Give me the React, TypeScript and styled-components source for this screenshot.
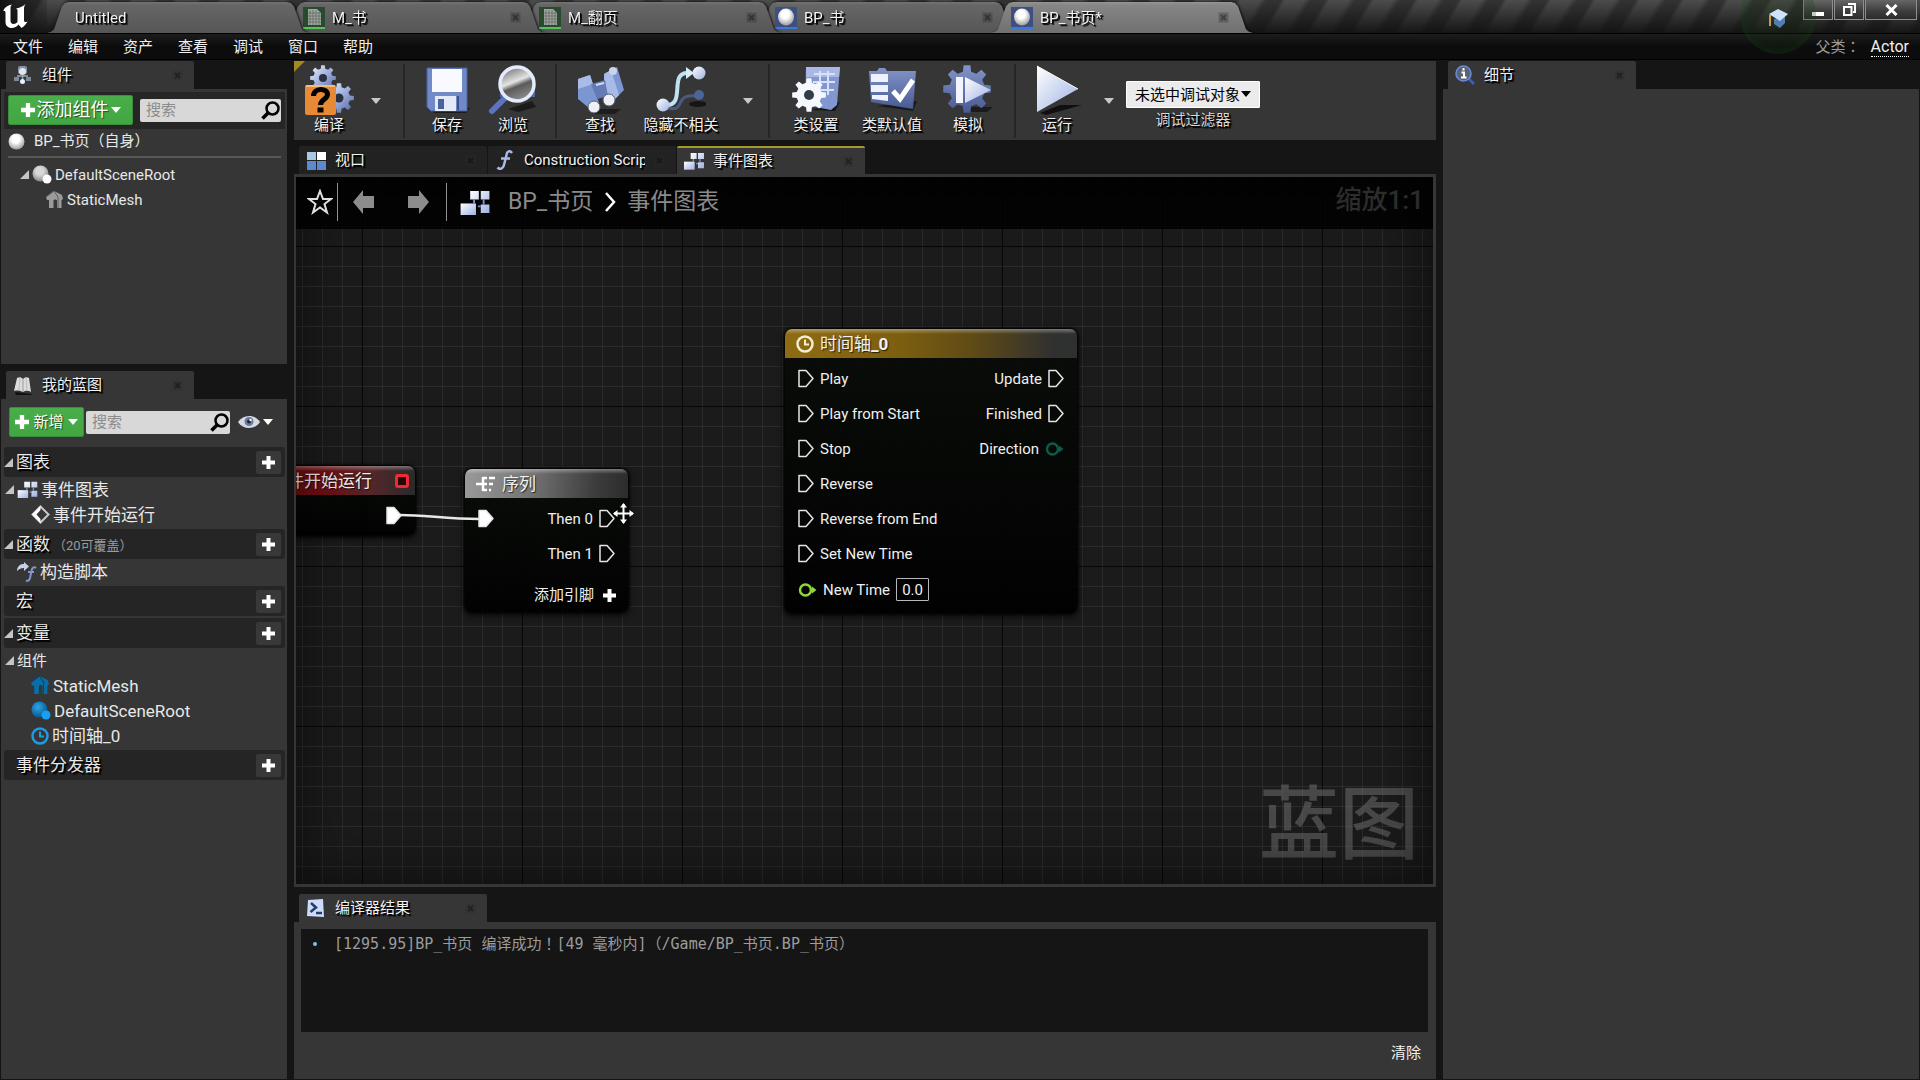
import React from 'react';
import styled, { createGlobalStyle, css } from 'styled-components';

const GlobalStyle = createGlobalStyle`
  *, *::before, *::after { box-sizing: border-box; }
  body { margin: 0; background: #151515; color: #e8e8e8; font-family: Roboto, "Noto Sans CJK SC", sans-serif; font-size: 15px; line-height: 20px; }
  button, input, select { font: inherit; color: inherit; margin: 0; padding: 0; border: 0; background: none; border-radius: 0; outline: none; }
  button { cursor: pointer; white-space: nowrap; }
  ul { list-style: none; margin: 0; padding: 0; }
  svg { display: block; flex: none; }
`;

const shadow = css`text-shadow: 1px 1px 1px #000, 2px 2px 1px #000;`;

/* ---------- shell ---------- */

const App_ = styled.div`
  height: 100vh;
  display: flex;
  flex-direction: column;
  background: #151515;
  overflow: hidden;
`;

const TitleBar = styled.header`
  height: 34px;
  flex: none;
  display: flex;
  align-items: flex-end;
  border-bottom: 1px solid #000;
  background:
    linear-gradient(180deg, rgba(20, 20, 20, 0) 0%, rgba(16, 16, 16, 0.9) 100%),
    repeating-linear-gradient(121deg, #4c4c4c 0, #4c4c4c 16px, #333 22px, #333 34px, #4c4c4c 38px);
`;

const LogoBox = styled.div`
  width: 47px;
  height: 33px;
  padding: 3px 0 0 2px;
  background: linear-gradient(90deg, #111, rgba(17, 17, 17, 0.2));
`;

const DocTabs = styled.div`
  display: flex;
  height: 31px;
  flex: 1;
`;

const DocTabShape = styled.div<{ $active?: boolean; $order: number }>`
  position: relative;
  z-index: ${p => p.$order};
  width: 262px;
  height: 31px;
  margin-right: -26px;
  padding: 0 24px 0 20px;
  display: flex;
  align-items: center;
  gap: 7px;
  filter: drop-shadow(1px 0 1px rgba(0, 0, 0, 0.8));
  &::before {
    content: '';
    position: absolute;
    inset: 0;
    z-index: -1;
    background: ${p => (p.$active
      ? 'linear-gradient(180deg, #969696 0, #868686 3px, #707070 100%)'
      : 'linear-gradient(180deg, #747474 0, #666 3px, #565656 100%)')};
    clip-path: polygon(0 100%, 4px 96%, 7px 88%, 15px 14%, 18px 3%, 22px 0, calc(100% - 22px) 0, calc(100% - 18px) 3%, calc(100% - 15px) 14%, calc(100% - 7px) 88%, calc(100% - 4px) 96%, 100% 100%);
  }
`;

const TabLabel = styled.button<{ $indent?: boolean }>`
  flex: 1;
  min-width: 0;
  text-align: left;
  overflow: hidden;
  line-height: 24px;
  color: #f2f2f2;
  padding-left: ${p => (p.$indent ? '8px' : '0')};
  ${shadow}
`;

const CloseButton = styled.button`
  width: 11px;
  height: 11px;
  flex: none;
  opacity: 0.55;
`;

const WindowTools = styled.div`
  align-self: flex-start;
  display: flex;
  height: 33px;
  padding-right: 3px;
`;

const TutorialButton = styled.button`
  position: relative;
  width: 48px;
  height: 33px;
  padding: 4px 0 0 14px;
  &::before {
    content: '';
    position: absolute;
    left: -14px;
    top: -24px;
    width: 76px;
    height: 78px;
    border-radius: 50%;
    background: radial-gradient(circle, rgba(20, 60, 20, 0.2) 55%, rgba(20, 80, 20, 0.5) 100%);
    pointer-events: none;
  }
  svg { position: relative; }
`;

const WindowButton = styled.button<{ $wide?: boolean }>`
  width: ${p => (p.$wide ? '52px' : '30px')};
  height: 20px;
  display: flex;
  align-items: center;
  justify-content: center;
  border: 1px solid #8e8e8e;
  border-top: 0;
  margin-left: 1px;
  background: linear-gradient(180deg, #666, #3c3c3c 60%, #2c2c2c);
`;

const MenuBar = styled.nav`
  height: 26px;
  flex: none;
  display: flex;
  align-items: center;
  gap: 25px;
  padding: 0 11px 0 13px;
  border-bottom: 1px solid #000;
  background: linear-gradient(180deg, #1c1c1c, #0c0c0c 50%, #0c0c0c);
`;

const MenuItem = styled.button`
  line-height: 24px;
  color: #f0f0f0;
`;

const ParentClass = styled.div`
  margin-left: auto;
  display: flex;
  align-items: center;
  gap: 10px;
  color: #9a9a9a;
  font-family: Roboto, "Noto Sans CJK TC", sans-serif;
  a {
    font-size: 16px;
    line-height: 19px;
    color: #f0f0f0;
    text-decoration: none;
    border-bottom: 1px dotted #fff;
  }
`;

const Workspace = styled.main`
  flex: 1;
  min-height: 0;
  display: grid;
  grid-template-columns: 286px minmax(0, 1fr) 476px;
  column-gap: 7px;
  padding: 1px;
`;

const Dock = styled.section`
  display: flex;
  flex-direction: column;
  min-height: 0;
  min-width: 0;
`;

/* ---------- dock tabs ---------- */

const TabStrip = styled.div<{ $gap?: number }>`
  display: flex;
  gap: 1px;
  height: 28px;
  flex: none;
  margin-top: ${p => p.$gap ?? 0}px;
  padding-left: 5px;
`;

const DockTab = styled.div<{ $state?: 'idle' | 'focus' }>`
  width: 188px;
  height: 28px;
  display: flex;
  align-items: center;
  gap: 9px;
  padding: 0 11px 0 7px;
  border-top: ${p => (p.$state === 'focus' ? '2px solid #a79a2c' : '0')};
  border-radius: 2px 2px 0 0;
  background: ${p => (p.$state === 'idle' ? '#222' : '#363636')};
`;

const TabIcon = styled.span`
  width: 20px;
  display: flex;
  justify-content: center;
`;

const Panel = styled.div<{ $fill?: boolean }>`
  flex: ${p => (p.$fill ? '1' : 'none')};
  min-height: 0;
  background: #363636;
`;

/* ---------- left column ---------- */

const ComponentsPanel = styled(Panel)`
  height: 275px;
`;

const ComponentTools = styled.div`
  display: flex;
  align-items: center;
  gap: 7px;
  margin: 0 2px 0 3px;
  height: 40px;
  padding: 3px 4px 1px 4px;
  background: linear-gradient(#363636 3px, #262626 3px);
`;

const GreenButton = styled.button<{ $large?: boolean }>`
  flex: none;
  height: 30px;
  display: flex;
  align-items: center;
  justify-content: center;
  gap: ${p => (p.$large ? '2px' : '4px')};
  width: ${p => (p.$large ? '125px' : '75px')};
  font-size: ${p => (p.$large ? '18px' : '15px')};
  color: #fff;
  background: linear-gradient(180deg, #49ae49, #42a642);
  border: 1px solid #3a8f3a;
  border-radius: 2px;
  text-shadow: 1px 1px 1px #1c4a1c;
`;

const SearchBox = styled.label`
  flex: 1;
  min-width: 0;
  height: 23px;
  display: flex;
  align-items: center;
  padding: 0 1px 0 6px;
  background: #d8d8d8;
  border-radius: 2px;
  input { flex: 1; min-width: 0; color: #222; line-height: 20px; }
  input::placeholder { color: #8c8c8c; opacity: 1; }
`;

const SelfRow = styled.div`
  display: flex;
  align-items: center;
  gap: 9px;
  height: 29px;
  margin: 0 6px 4px 7px;
  padding-bottom: 3px;
  border-bottom: 2px solid #585858;
  font-family: Roboto, "Noto Sans CJK TC", sans-serif;
`;

const TreeRow = styled.li<{ $depth: number; $big?: boolean }>`
  display: flex;
  align-items: center;
  height: 25px;
  gap: 3px;
  padding-left: ${p => p.$depth}px;
  font-size: ${p => (p.$big ? '17px' : '15px')};
`;

const Expander = styled.button`
  width: 9px;
  height: 20px;
  display: flex;
  align-items: center;
  flex: none;
`;

const BlueprintTools = styled.div`
  display: flex;
  align-items: center;
  gap: 2px;
  height: 48px;
  padding: 0 14px 2px 8px;
`;

const ViewButton = styled.button`
  display: flex;
  align-items: center;
  gap: 3px;
  margin-left: 6px;
`;

const Category = styled.div`
  display: flex;
  align-items: center;
  height: 30px;
  margin: 0 2px 0 3px;
  padding-right: 4px;
  background: #252525;
  border-radius: 3px;
`;

const CategoryName = styled.h3<{ $closed?: boolean }>`
  margin: 0;
  padding-left: ${p => (p.$closed ? '12px' : '3px')};
  font-size: 17px;
  font-weight: 400;
  line-height: 24px;
  ${shadow}
`;

const CategoryNote = styled.span`
  font-family: Roboto, "Noto Sans CJK TC", sans-serif;
  font-size: 13px;
  margin-left: 3px;
  padding-top: 3px;
  color: #9a9a9a;
`;

const AddButton = styled.button`
  margin-left: auto;
  width: 25px;
  height: 23px;
  display: flex;
  align-items: center;
  justify-content: center;
  background: #383838;
  border-radius: 2px;
`;

const CategoryBlock = styled.section`
  margin-bottom: 2px;
`;

/* ---------- toolbar ---------- */

const Toolbar = styled.div`
  position: relative;
  flex: none;
  height: 79px;
  display: flex;
  align-items: center;
  background: #363636;
  overflow: hidden;
  &::before {
    content: '';
    position: absolute;
    left: 0;
    top: 0;
    border-top: 11px solid #a48824;
    border-right: 11px solid transparent;
  }
`;

const ToolGroup = styled.div<{ $pad?: number; $end?: number }>`
  display: flex;
  align-items: center;
  height: 74px;
  padding: 0 ${p => p.$end ?? p.$pad ?? 8}px 0 ${p => p.$pad ?? 8}px;
  border-right: 2px solid #262626;
  &:last-child { border-right: 0; }
`;

const ToolButton = styled.button<{ $width: number }>`
  width: ${p => p.$width}px;
  height: 72px;
  display: flex;
  flex-direction: column;
  align-items: center;
  color: #f0f0f0;
  ${shadow}
`;

const DropButton = styled.button`
  width: 22px;
  height: 70px;
  display: flex;
  align-items: center;
  justify-content: center;
  margin-left: 9px;
`;

const DebugFilter = styled.div`
  display: flex;
  flex-direction: column;
  align-items: center;
  gap: 2px;
  margin-left: 6px;
  padding-top: 10px;
  label { color: #d8d8d8; ${shadow} }
`;

const SelectBox = styled.div`
  position: relative;
  select {
    appearance: none;
    width: 134px;
    height: 27px;
    padding-left: 8px;
    color: #000;
    background: #ebebeb;
    border: 1px solid #fff;
    border-radius: 1px;
  }
  svg { position: absolute; right: 9px; top: 10px; pointer-events: none; }
`;

/* ---------- graph ---------- */

const GraphFrame = styled.div`
  flex: 1;
  min-height: 0;
  border: 3px solid #363636;
  border-left-width: 2px;
`;

const Graph = styled.div`
  position: relative;
  height: 100%;
  overflow: hidden;
  background-color: #1b1b1b;
  background-image:
    linear-gradient(90deg, #070707 1px, transparent 1px),
    linear-gradient(180deg, #070707 1px, transparent 1px),
    linear-gradient(90deg, #2b2b2b 1px, transparent 1px),
    linear-gradient(180deg, #2b2b2b 1px, transparent 1px);
  background-size: 160px 160px, 160px 160px, 20px 20px, 20px 20px;
  background-position: 66px 0, 0 69px, 6px 0, 0 9px;
  &::after {
    content: '';
    position: absolute;
    inset: 0;
    pointer-events: none;
    box-shadow: inset 0 0 60px rgba(0, 0, 0, 0.6);
  }
`;

const GraphHeader = styled.div`
  position: relative;
  z-index: 3;
  height: 52px;
  display: flex;
  align-items: center;
  padding: 0 9px 2px 7px;
  background: rgba(0, 0, 0, 0.87);
  font-size: 23px;
  line-height: 30px;
  color: #8a8a8a;
`;

const HeaderButton = styled.button<{ $width: number }>`
  width: ${p => p.$width}px;
  height: 38px;
  display: flex;
  align-items: center;
  justify-content: center;
`;

const HeaderRule = styled.span`
  width: 1px;
  height: 38px;
  background: #909090;
`;

const Crumbs = styled.div`
  display: flex;
  align-items: center;
  gap: 11px;
  margin-left: 13px;
  svg:first-child { margin-right: 7px; }
`;

const ZoomLevel = styled.span`
  margin-left: auto;
  padding-bottom: 4px;
  font-size: 26px;
  font-weight: 500;
  color: #2c2c2c;
`;

const Watermark = styled.div`
  position: absolute;
  right: 14px;
  bottom: 14px;
  font-size: 80px;
  line-height: 90px;
  font-weight: 500;
  color: rgba(110, 110, 110, 0.55);
`;

const Node = styled.article<{ $x: number; $y: number; $w: number; $h: number }>`
  position: absolute;
  left: ${p => p.$x}px;
  top: ${p => p.$y}px;
  width: ${p => p.$w}px;
  height: ${p => p.$h}px;
  border-radius: 8px;
  border: 1px solid #050505;
  background: linear-gradient(180deg, rgba(8, 12, 8, 0.93), rgba(0, 0, 0, 0.95));
  box-shadow: 0 2px 6px rgba(0, 0, 0, 0.8), 0 0 2px #000;
  color: #f0f0f0;
`;

const headers = {
  red: 'linear-gradient(90deg, #6e0f14 0%, #6e0f14 50%, #55262a 75%, #2a2a2a 100%)',
  gray: 'linear-gradient(95deg, #9a9a9a 0%, #747474 40%, #3c3c3c 80%, #2c2c2c 100%)',
  gold: 'linear-gradient(90deg, #8f6c12 0%, #7c5e10 40%, #5e4a16 65%, #2f3030 92%)',
};

const NodeHeader = styled.header<{ $tone: keyof typeof headers }>`
  height: 29px;
  display: flex;
  align-items: center;
  gap: 6px;
  padding: 0 6px 0 11px;
  border-radius: 7px 7px 0 0;
  font-size: 17px;
  line-height: 24px;
  background: linear-gradient(180deg, rgba(255, 255, 255, 0.35) 0, rgba(255, 255, 255, 0) 5px), ${p => headers[p.$tone]};
  text-shadow: 1px 1px 1px rgba(0, 0, 0, 0.7);
`;

const Delegate = styled.span`
  width: 14px;
  height: 14px;
  margin-left: auto;
  border: 3px solid #ee2b33;
  border-radius: 3px;
  background: #2a0507;
`;

const Pins = styled.div`
  display: flex;
  justify-content: space-between;
  padding: 3px 13px 0 13px;
`;

const PinColumn = styled.div<{ $end?: boolean }>`
  display: flex;
  flex-direction: column;
  align-items: ${p => (p.$end ? 'flex-end' : 'flex-start')};
`;

const PinRow = styled.div`
  height: 35px;
  display: flex;
  align-items: center;
  gap: 6px;
  white-space: nowrap;
`;

const ValueRow = styled(PinRow)`
  padding-top: 2px;
`;

const PinValue = styled.input`
  width: 33px;
  height: 23px;
  text-align: center;
  border: 1px solid #b8b8b8;
  border-radius: 1px;
`;

const AddPin = styled.button`
  display: flex;
  align-items: center;
  gap: 9px;
  margin: 14px 12px 0 auto;
`;

const Overlay = styled.svg`
  position: absolute;
  left: 0;
  top: 0;
  pointer-events: none;
`;

/* ---------- results ---------- */

const Results = styled(Panel)`
  height: 157px;
  padding: 7px 8px 0 7px;
  display: flex;
  flex-direction: column;
`;

const Log = styled.ul`
  height: 103px;
  padding: 5px 12px;
  background: #151515;
  color: #9c9c9c;
  font-family: "DejaVu Sans Mono", "Noto Sans CJK TC", monospace;
  font-size: 15px;
  li { display: flex; align-items: center; gap: 17px; white-space: pre; }
  li::before { content: ''; width: 4px; height: 4px; border-radius: 50%; background: #7cc4ee; }
`;

const ClearButton = styled.button`
  margin: 11px 7px 0 auto;
  color: #f0f0f0;
`;

/* ---------- drawings ---------- */

const Gradients = () => (
  <svg width="0" height="0" aria-hidden="true">
    <defs>
      <linearGradient id="steel" x1="0" y1="0" x2="1" y2="1">
        <stop offset="0" stopColor="#eef3ff" /><stop offset="0.5" stopColor="#9fb0dd" /><stop offset="1" stopColor="#4f62a0" />
      </linearGradient>
      <linearGradient id="pale" x1="0" y1="0" x2="1" y2="1">
        <stop offset="0" stopColor="#ffffff" /><stop offset="1" stopColor="#9db1e2" />
      </linearGradient>
      <linearGradient id="slate" x1="0" y1="0" x2="0" y2="1">
        <stop offset="0" stopColor="#8294c8" /><stop offset="1" stopColor="#485a92" />
      </linearGradient>
      <radialGradient id="ball" cx="0.45" cy="0.35" r="0.6">
        <stop offset="0.4" stopColor="#ffffff" /><stop offset="1" stopColor="#a8a8a8" />
      </radialGradient>
      <radialGradient id="blueBall" cx="0.4" cy="0.35" r="0.6">
        <stop offset="0" stopColor="#2ea6e6" /><stop offset="1" stopColor="#0a5f96" />
      </radialGradient>
      <linearGradient id="lens" x1="0.2" y1="0" x2="0.6" y2="1">
        <stop offset="0" stopColor="#6e6e6e" /><stop offset="0.45" stopColor="#e4e4e4" /><stop offset="0.6" stopColor="#5a5a5a" /><stop offset="1" stopColor="#8e8e8e" />
      </linearGradient>
    </defs>
  </svg>
);

const gearPath = (cx: number, cy: number, r: number, teeth = 8, depth = 0.26) => {
  const pts: string[] = [];
  const step = (Math.PI * 2) / teeth;
  for (let i = 0; i < teeth; i++) {
    const a = i * step - Math.PI / 2;
    [[-0.3, 1 - depth], [-0.18, 1], [0.18, 1], [0.3, 1 - depth]].forEach(([o, k]) => {
      pts.push(`${(cx + Math.cos(a + o * step) * r * k).toFixed(2)} ${(cy + Math.sin(a + o * step) * r * k).toFixed(2)}`);
    });
  }
  return `M${pts.join('L')}Z`;
};

const Svg = ({ w, h, vb, children }: { w: number; h: number; vb?: string; children: React.ReactNode }) => (
  <svg width={w} height={h} viewBox={vb ?? `0 0 ${w} ${h}`} fill="none" aria-hidden="true">{children}</svg>
);

const Logo = () => (
  <Svg w={26} h={26}>
    <path d="M1 8C3 4 6 2 10 1.500C8.500 3 8.500 4 8.500 6V17.500C8.500 19.500 9.500 21 11.500 21C13 21 14.500 20 15.500 19V7.500C15.500 6.500 15 6 14 5.500C17 5 21 3.500 23.500 1C22.500 2.500 22 4 22 6V17C22 18.500 22.500 19 23.500 19C24.500 19 25.200 18.500 25.800 17.500C24.500 21 22 23.500 19.500 25L16.500 21.500C15 23.500 12.500 25 9.500 25C6 25 3.500 22.500 3.500 19V10C3.500 8 2.500 7.500 1 8Z" fill="#fff" />
  </Svg>
);
const CloseX = () => (
  <Svg w={11} h={11}><rect x="0.5" y="0.5" width="10" height="10" fill="#2c2c2c" fillOpacity="0.6" /><path d="M3 3L8 8M8 3L3 8" stroke="#111" strokeWidth="2" /></Svg>
);
const Caret = ({ color = '#fff' }: { color?: string }) => (
  <Svg w={10} h={6}><path d="M0 0H10L5 6Z" fill={color} /></Svg>
);
const Plus = ({ size = 13 }: { size?: number }) => (
  <Svg w={size} h={size} vb="0 0 13 13"><path d="M4.500 0H8.500V4.500H13V8.500H8.500V13H4.500V8.500H0V4.500H4.500Z" fill="#fff" /></Svg>
);
const Arrow = () => <Svg w={9} h={9}><path d="M9 0V9H0Z" fill="#c4c4c4" /></Svg>;
const SearchIcon = () => (
  <Svg w={19} h={19}><circle cx="11.500" cy="7.500" r="6" stroke="#000" strokeWidth="2.500" /><path d="M7 12L1.500 17.500" stroke="#000" strokeWidth="3.500" /></Svg>
);
const MatIcon = () => (
  <Svg w={22} h={22}><rect width="22" height="22" fill="#294a2e" /><path d="M5 2H14L18 6V18H5Z" fill="#a2a8a2" /><path d="M7 3V18M10 3V18M13 3V18M16 5V18M5 6H18M5 9H18M5 12H18M5 15H18" stroke="#6d756d" strokeWidth="1" /><path d="M0 21H22" stroke="#52c45c" strokeWidth="2" /></Svg>
);
const BpIcon = () => (
  <Svg w={22} h={22}><rect width="22" height="22" fill="#3c4f80" /><ellipse cx="11" cy="10" rx="8" ry="8.500" fill="url(#ball)" /><path d="M0 21H22" stroke="#3f78d8" strokeWidth="2" /></Svg>
);
const CapIcon = () => (
  <Svg w={22} h={22}><path d="M6 11V16L12 20L17 15V9Z" fill="#4f7db4" /><path d="M1 6L10 1L20 6L12 13Z" fill="#cfe2f8" /><path d="M2 7V18" stroke="#c89b4e" strokeWidth="2" /></Svg>
);
const ComponentsIcon = () => (
  <Svg w={20} h={20}><rect x="5" y="1" width="9" height="8" rx="2" fill="#8492a8" /><circle cx="9.500" cy="6.500" r="3.500" fill="#dfe6ee" /><rect x="1" y="12" width="5" height="4" fill="#7c889c" /><rect x="13" y="12" width="5" height="4" fill="#7c889c" /><path d="M9.500 10V15M4 11H15" stroke="#9aa6b8" strokeWidth="1.500" /><circle cx="9.500" cy="16.500" r="2.500" fill="#eef" /></Svg>
);
const BookIcon = () => (
  <Svg w={20} h={19}><path d="M2 16L19 18L18 19H3Z" fill="#000" opacity="0.7" /><path d="M4 2C6 1 8 1 10 3C12 1 14 1 16 2L18 16C15 14 12 15 10 16C8 15 5 14 1 15Z" fill="#dcdcdc" /><path d="M10 3V16" stroke="#9a9a9a" /><path d="M7 2L6 14M13 2L14 14" stroke="#bcbcbc" /></Svg>
);
const GridIcon = ({ w = 20, h = 18 }: { w?: number; h?: number }) => (
  <Svg w={w} h={h} vb="0 0 30 26"><path d="M10 1H19V10H10ZM21 1H30V10H21ZM21 15H30V24H21Z" fill="url(#pale)" /><path d="M0 14H16V26H0Z" fill="url(#pale)" /><path d="M18 17H21M24 10V15M14 10V14" stroke="#7d8fc4" strokeWidth="2" /></Svg>
);
const ViewportIcon = () => (
  <Svg w={19} h={19}><path d="M0 1H9V9H0Z" fill="#a9c8e4" /><path d="M10 1H19V9H10Z" fill="#fff" /><path d="M0 10H9V19H0ZM10 10H19V19H10Z" fill="#5c8ad0" /></Svg>
);
const FuncIcon = () => (
  <Svg w={18} h={20}><path d="M16 3C14 0 11 1 10.500 5L8 15C7 19 4 20 1.500 17.500M5 8.500H14" stroke="#a9b8e8" strokeWidth="2.500" /></Svg>
);
const InfoIcon = () => (
  <Svg w={20} h={20}><path d="M13 13L19 19" stroke="#3c5bb0" strokeWidth="3" /><circle cx="8.500" cy="8.500" r="7.500" fill="#5b6272" stroke="#6c8ad8" strokeWidth="1.500" /><path d="M8.500 3V5.500M6.500 7.500H9V12.500M6 12.500H11.500" stroke="#fff" strokeWidth="2" /></Svg>
);
const ResultsIcon = () => (
  <Svg w={18} h={19}><path d="M1 1L16 0L17 18L0 17Z" fill="#ccdcfa" /><path d="M4 4L9 8.500L3.500 13M9 14H15" stroke="#273c66" strokeWidth="2.500" /></Svg>
);
const Sphere = () => <Svg w={17} h={17}><circle cx="8.500" cy="8.500" r="8" fill="url(#ball)" /></Svg>;
const SceneIcon = ({ blue }: { blue?: boolean }) => (
  <Svg w={20} h={19}><circle cx="8.500" cy="8.500" r="8" fill={blue ? 'url(#blueBall)' : 'url(#ball)'} opacity={blue ? 1 : 0.8} /><circle cx="15" cy="14" r="4.500" fill={blue ? '#16a0f0' : '#fff'} /></Svg>
);
const MeshIcon = ({ blue, w = 18 }: { blue?: boolean; w?: number }) => (
  <Svg w={w} h={w} vb="0 0 18 18"><path d="M0 6L8 0L16 4L17 8L15.500 9V17H11V10C11 8 7.500 8 7.500 10V17H3V9L1 9Z" fill={blue ? '#0a6ea6' : '#9b9b9b'} /><path d="M0 6L8 0L12 6V17" stroke={blue ? '#064468' : '#5e5e5e'} strokeWidth="1" /></Svg>
);
const ClockIcon = ({ color }: { color: string }) => (
  <Svg w={18} h={18}><circle cx="9" cy="9" r="7.500" stroke={color} strokeWidth="2.500" /><path d="M9 4.500V9.500H13" stroke={color} strokeWidth="2" /></Svg>
);
const EventIcon = () => (
  <Svg w={19} h={19}><path d="M9.500 1.500L17.500 9.500L9.500 17.500L1.500 9.500Z" stroke="#c8c8c8" strokeWidth="2" /><path d="M9.500 1L1 9.500L9.500 18V14L5.500 9.500L9.500 5Z" fill="#fff" /></Svg>
);
const OverrideIcon = () => (
  <Svg w={20} h={20}><path d="M0 8C1 3 4 2 7 2V0L12 4.500L7 9V6C4 6 2 7 0 9Z" fill="#c6d0ea" /><path d="M19 6C17 4 15 6 14.500 9L13 16C12.500 18 11 19.500 9 18.500M11 10H17" stroke="#8894c8" strokeWidth="2" /></Svg>
);
const EyeIcon = () => (
  <Svg w={22} h={14}><path d="M0 7C5 -1 17 -1 22 7C17 15 5 15 0 7Z" fill="#d6d9e2" /><circle cx="11" cy="6.500" r="4.500" fill="#6b7ba0" /><circle cx="11" cy="6.500" r="2" fill="#1d2436" /><circle cx="12.500" cy="5" r="1.200" fill="#fff" /></Svg>
);

const CompileIcon = () => (
  <Svg w={50} h={50}>
    <path d={gearPath(19, 13, 13)} fill="url(#steel)" /><circle cx="19" cy="13" r="4" fill="#2c3140" />
    <path d={gearPath(35, 33, 15)} fill="url(#steel)" /><circle cx="35" cy="33" r="4.500" fill="#2c3140" />
    <rect x="1" y="20" width="31" height="30" rx="2" fill="#e68a35" />
    <path d="M2 21H31" stroke="#f8bc78" strokeWidth="2" />
    <path d="M9.500 31C9.500 22.500 23.500 22.500 23.500 29.500C23.500 34.500 16.500 34 16.500 40" stroke="#000" strokeWidth="5" /><rect x="13.500" y="42.500" width="6" height="5" fill="#000" />
  </Svg>
);
const SaveIcon = () => (
  <Svg w={50} h={50}>
    <path d="M8 43H48L44 48H12Z" fill="#000" opacity="0.5" />
    <path d="M5 3H45V46H9L5 42Z" fill="#7189c6" stroke="#4b60a0" />
    <rect x="10" y="4" width="30" height="23" fill="#f8faff" /><rect x="13" y="31" width="21" height="15" fill="#e4e9f6" /><rect x="16" y="34" width="6" height="10" fill="#4b60a0" /><path d="M36 31V45" stroke="#3c5090" strokeWidth="2" />
  </Svg>
);
const BrowseIcon = () => (
  <Svg w={50} h={50}>
    <path d="M12 10L18 6V32H12ZM40 8L47 12V32H40Z" fill="#52679e" />
    <path d="M20 44L44 36L48 42L30 47Z" fill="#000" opacity="0.5" />
    <path d="M18 32L4 46" stroke="#5b74bd" strokeWidth="6" strokeLinecap="round" />
    <circle cx="29" cy="19" r="17" fill="url(#lens)" stroke="#e4ecfc" strokeWidth="3.500" />
  </Svg>
);
const FindIcon = () => (
  <Svg w={50} h={50}>
    <path d="M12 44H46L40 49H18Z" fill="#000" opacity="0.45" />
    <path d="M3 14L15 10L24 38L14 43L3 34Z" fill="#7c96d2" /><path d="M3 14L15 10L18 19L3 24Z" fill="#a9bce8" />
    <path d="M29 9L42 2L49 25L36 38L29 30Z" fill="#7c96d2" /><path d="M29 9L36 5L44 30L36 38L30 31Z" fill="#a8bbe8" />
    <path d="M16 19L30 15L33 31L22 34Z" fill="#647bb6" /><path d="M21 20L29 18" stroke="#cfdcf8" strokeWidth="2" />
    <circle cx="19" cy="42" r="6" fill="#eef0f6" stroke="#59617a" /><circle cx="34" cy="35" r="6" fill="#eef0f6" stroke="#59617a" /><circle cx="38" cy="6" r="4" fill="#c9d3ec" />
  </Svg>
);
const HideIcon = () => (
  <Svg w={50} h={50}>
    <path d="M9 42C32 50 16 28 40 31" stroke="#4b5a80" strokeWidth="3" /><ellipse cx="42" cy="39" rx="9" ry="3" fill="#000" opacity="0.6" /><circle cx="43" cy="30" r="5" fill="#4d6596" />
    <path d="M9 40C31 42 12 7 32 8" stroke="#bfe3f2" strokeWidth="4" /><path d="M30 2L38 8L30 14Z" fill="#d6eef8" />
    <circle cx="7" cy="40" r="6.500" fill="url(#pale)" /><circle cx="43" cy="8" r="6.500" fill="url(#pale)" />
  </Svg>
);
const SettingsIcon = () => (
  <Svg w={50} h={50}>
    <path d="M20 45L44 46L49 37L40 40Z" fill="#000" opacity="0.6" />
    <path d="M15 2H49L46 40L40 45L14 40Z" fill="#8296cf" /><path d="M15 2H49L48 12H15Z" fill="#a9b8e4" />
    <path d="M23 9H44M22 17H44M22 25H43M29 6V30M37 6V30" stroke="#d8e1fa" strokeWidth="2" />
    <path d={gearPath(18, 30, 17)} fill="#f6f8ff" /><circle cx="18" cy="30" r="5" fill="#343a48" />
  </Svg>
);
const DefaultsIcon = () => (
  <Svg w={50} h={50}>
    <path d="M10 41L46 46L50 36Z" fill="#000" opacity="0.5" />
    <path d="M2 6H10L12 3H18L20 6H49L46 44L4 37Z" fill="url(#slate)" />
    <path d="M4 9H21V17H4ZM4 20H21V27H4ZM5 30H21V36L5 34Z" fill="#eef2fc" />
    <path d="M26 26L33 34L46 15" stroke="#fff" strokeWidth="5" />
  </Svg>
);
const SimulateIcon = () => (
  <Svg w={50} h={50}>
    <path d="M24 42H50L44 47H28Z" fill="#000" opacity="0.5" />
    <path d={gearPath(24, 24, 24, 8)} fill="url(#slate)" />
    <path d="M13 12H20V38H13Z" fill="#f2f5ff" /><path d="M22 12L48 25L22 38Z" fill="url(#pale)" />
  </Svg>
);
const PlayIcon = () => (
  <Svg w={50} h={50}>
    <path d="M8 48L28 40H50L14 50Z" fill="#000" opacity="0.7" /><path d="M5 1L46 24L5 47Z" fill="url(#pale)" /><path d="M5 1L46 24" stroke="#fff" />
  </Svg>
);

const ExecPin = ({ filled }: { filled?: boolean }) => (
  <Svg w={16} h={19}><path d="M1 1.500H8L15 9.500L8 17.500H1Z" stroke="#e6e6e6" strokeWidth="1.500" strokeLinejoin="round" fill={filled ? '#fff' : 'none'} /></Svg>
);
const DataPin = ({ color }: { color: string }) => (
  <Svg w={19} h={16}><circle cx="7.500" cy="8" r="5.500" stroke={color} strokeWidth="2.500" /><path d="M14 4.500L18.500 8L14 11.500Z" fill={color} /></Svg>
);
const SequenceIcon = () => (
  <Svg w={20} h={16}><path d="M0 8H6M7 1V15M7 2H11M7 8H11M7 14H11" stroke="#fff" strokeWidth="2.500" /><path d="M13 2H19M13 8H17M13 14H15" stroke="#fff" strokeWidth="2.500" /></Svg>
);
const NavArrow = ({ flip }: { flip?: boolean }) => (
  <Svg w={22} h={26}><path d={flip ? 'M22 13L12 1V7H1V19H12V25Z' : 'M0 13L10 1V7H21V19H10V25Z'} fill="#8c8c8c" /></Svg>
);

/* ---------- content ---------- */

const docs = [
  { name: 'Untitled' },
  { name: 'M_书', icon: <MatIcon /> },
  { name: 'M_翻页', icon: <MatIcon /> },
  { name: 'BP_书', icon: <BpIcon /> },
  { name: 'BP_书页*', icon: <BpIcon />, active: true },
];
const menus = ['文件', '编辑', '资产', '查看', '调试', '窗口', '帮助'];
const timelineInputs = ['Play', 'Play from Start', 'Stop', 'Reverse', 'Reverse from End', 'Set New Time'];

const Tab = ({ icon, name, state }: { icon: React.ReactNode; name: string; state?: 'idle' | 'focus' }) => (
  <DockTab $state={state}>
    <TabIcon>{icon}</TabIcon>
    <TabLabel>{name}</TabLabel>
    <CloseButton aria-label={`关闭 ${name}`}><CloseX /></CloseButton>
  </DockTab>
);

const Search = () => (
  <SearchBox><input type="text" placeholder="搜索" aria-label="搜索" /><SearchIcon /></SearchBox>
);

const CategoryBar = ({ name, note, closed }: { name: string; note?: string; closed?: boolean }) => (
  <Category>
    {!closed && <Expander aria-label={`折叠 ${name}`}><Arrow /></Expander>}
    <CategoryName $closed={closed}>{name}</CategoryName>
    {note && <CategoryNote>{note}</CategoryNote>}
    <AddButton aria-label={`添加 ${name}`}><Plus /></AddButton>
  </Category>
);

const Tool = ({ icon, name, width }: { icon: React.ReactNode; name: string; width: number }) => (
  <ToolButton $width={width}>{icon}{name}</ToolButton>
);

export default function App() {
  return (
    <App_>
      <GlobalStyle />
      <Gradients />
      <TitleBar>
        <LogoBox><Logo /></LogoBox>
        <DocTabs>
          {docs.map((d, i) => (
            <DocTabShape key={d.name} $active={d.active} $order={d.active ? 9 : 8 - i}>
              {d.icon}
              <TabLabel $indent={!d.icon}>{d.name}</TabLabel>
              {d.icon && <CloseButton aria-label={`关闭 ${d.name}`}><CloseX /></CloseButton>}
            </DocTabShape>
          ))}
        </DocTabs>
        <WindowTools>
          <TutorialButton aria-label="教程"><CapIcon /></TutorialButton>
          <WindowButton aria-label="最小化"><Svg w={12} h={12}><path d="M0 8H12V12H0Z" fill="#fff" /></Svg></WindowButton>
          <WindowButton aria-label="还原"><Svg w={13} h={13}><path d="M5 1H12V9H10M1 4H8.500V12H1Z" stroke="#fff" strokeWidth="2" /></Svg></WindowButton>
          <WindowButton $wide aria-label="关闭"><Svg w={13} h={12}><path d="M1.500 1L11.500 11M11.500 1L1.500 11" stroke="#fff" strokeWidth="3" /></Svg></WindowButton>
        </WindowTools>
      </TitleBar>
      <MenuBar>
        {menus.map(m => <MenuItem key={m}>{m}</MenuItem>)}
        <ParentClass>父类： <a href="#actor">Actor</a></ParentClass>
      </MenuBar>

      <Workspace>
        <Dock>
          <TabStrip><Tab icon={<ComponentsIcon />} name="组件" /></TabStrip>
          <ComponentsPanel>
            <ComponentTools>
              <GreenButton $large><Plus size={14} />添加组件<Caret /></GreenButton>
              <Search />
            </ComponentTools>
            <SelfRow><Sphere />BP_书页（自身）</SelfRow>
            <ul>
              <TreeRow $depth={19}><Expander aria-label="折叠"><Arrow /></Expander><SceneIcon />DefaultSceneRoot</TreeRow>
              <TreeRow $depth={45}><MeshIcon />StaticMesh</TreeRow>
            </ul>
          </ComponentsPanel>

          <TabStrip $gap={7}><Tab icon={<BookIcon />} name="我的蓝图" /></TabStrip>
          <Panel $fill>
            <BlueprintTools>
              <GreenButton><Plus size={14} />新增<Caret /></GreenButton>
              <Search />
              <ViewButton aria-label="视图选项"><EyeIcon /><Caret /></ViewButton>
            </BlueprintTools>
            <CategoryBlock>
              <CategoryBar name="图表" />
              <ul>
                <TreeRow $depth={4} $big><Expander aria-label="折叠"><Arrow /></Expander><GridIcon w={21} h={17} />事件图表</TreeRow>
                <TreeRow $depth={30} $big><EventIcon />事件开始运行</TreeRow>
              </ul>
            </CategoryBlock>
            <CategoryBlock>
              <CategoryBar name="函数" note="（20可覆盖）" />
              <ul><TreeRow $depth={16} $big><OverrideIcon />构造脚本</TreeRow></ul>
            </CategoryBlock>
            <CategoryBlock><CategoryBar name="宏" closed /></CategoryBlock>
            <CategoryBlock>
              <CategoryBar name="变量" />
              <ul>
                <TreeRow $depth={4}><Expander aria-label="折叠"><Arrow /></Expander>组件</TreeRow>
                <TreeRow $depth={30} $big><MeshIcon blue w={19} />StaticMesh</TreeRow>
                <TreeRow $depth={30} $big><SceneIcon blue />DefaultSceneRoot</TreeRow>
                <TreeRow $depth={30} $big><ClockIcon color="#1d9be4" />时间轴_0</TreeRow>
              </ul>
            </CategoryBlock>
            <CategoryBlock><CategoryBar name="事件分发器" closed /></CategoryBlock>
          </Panel>
        </Dock>

        <Dock>
          <Toolbar>
            <ToolGroup $end={16}>
              <Tool icon={<CompileIcon />} name="编译" width={54} />
              <DropButton aria-label="编译选项"><Caret color="#c8c8c8" /></DropButton>
            </ToolGroup>
            <ToolGroup $pad={9}>
              <Tool icon={<SaveIcon />} name="保存" width={66} />
              <Tool icon={<BrowseIcon />} name="浏览" width={66} />
            </ToolGroup>
            <ToolGroup $pad={9}>
              <Tool icon={<FindIcon />} name="查找" width={68} />
              <Tool icon={<HideIcon />} name="隐藏不相关" width={94} />
              <DropButton aria-label="隐藏选项"><Caret color="#c8c8c8" /></DropButton>
            </ToolGroup>
            <ToolGroup $pad={8}>
              <Tool icon={<SettingsIcon />} name="类设置" width={76} />
              <Tool icon={<DefaultsIcon />} name="类默认值" width={76} />
              <Tool icon={<SimulateIcon />} name="模拟" width={76} />
            </ToolGroup>
            <ToolGroup $pad={9}>
              <Tool icon={<PlayIcon />} name="运行" width={64} />
              <DropButton aria-label="运行选项"><Caret color="#c8c8c8" /></DropButton>
              <DebugFilter>
                <SelectBox>
                  <select id="debug-target" defaultValue="none"><option value="none">未选中调试对象</option></select>
                  <Caret color="#000" />
                </SelectBox>
                <label htmlFor="debug-target">调试过滤器</label>
              </DebugFilter>
            </ToolGroup>
          </Toolbar>

          <TabStrip $gap={6}>
            <Tab icon={<ViewportIcon />} name="视口" state="idle" />
            <Tab icon={<FuncIcon />} name="Construction Script" state="idle" />
            <Tab icon={<GridIcon />} name="事件图表" state="focus" />
          </TabStrip>
          <GraphFrame>
            <Graph>
              <GraphHeader>
                <HeaderButton $width={34} aria-label="收藏">
                  <Svg w={26} h={26}><path d="M13 2L16 10H24L17.500 15L20 23.500L13 18.500L6 23.500L8.500 15L2 10H10Z" stroke="#e0e0e0" strokeWidth="2" /></Svg>
                </HeaderButton>
                <HeaderRule />
                <HeaderButton $width={52} aria-label="后退"><NavArrow /></HeaderButton>
                <HeaderButton $width={56} aria-label="前进"><NavArrow flip /></HeaderButton>
                <HeaderRule />
                <Crumbs>
                  <GridIcon w={30} h={25} />
                  <span>BP_书页</span>
                  <Svg w={12} h={22}><path d="M2 2L10 11L2 20" stroke="#fff" strokeWidth="2.500" /></Svg>
                  <span>事件图表</span>
                </Crumbs>
                <ZoomLevel>缩放1:1</ZoomLevel>
              </GraphHeader>

              <Watermark>蓝图</Watermark>

              <Node $x={-63} $y={288} $w={183} $h={71}>
                <NodeHeader $tone="red">
                  <EventIcon />
                  <span>事件开始运行</span>
                  <Delegate />
                </NodeHeader>
                <Pins><span /><PinRow><ExecPin filled /></PinRow></Pins>
              </Node>

              <Node $x={168} $y={291} $w={165} $h={145}>
                <NodeHeader $tone="gray"><SequenceIcon />序列</NodeHeader>
                <Pins>
                  <PinColumn><PinRow><ExecPin filled /></PinRow></PinColumn>
                  <PinColumn $end>
                    <PinRow>Then 0<ExecPin /></PinRow>
                    <PinRow>Then 1<ExecPin /></PinRow>
                  </PinColumn>
                </Pins>
                <AddPin>添加引脚<Plus /></AddPin>
              </Node>

              <Node $x={488} $y={151} $w={294} $h={286}>
                <NodeHeader $tone="gold"><ClockIcon color="#f6ecd0" /><span>时间轴<b>_0</b></span></NodeHeader>
                <Pins>
                  <PinColumn>
                    {timelineInputs.map(t => <PinRow key={t}><ExecPin />{t}</PinRow>)}
                    <ValueRow><DataPin color="#8fd63c" /><label htmlFor="new-time">New Time</label><PinValue id="new-time" type="text" defaultValue="0.0" /></ValueRow>
                  </PinColumn>
                  <PinColumn $end>
                    <PinRow>Update<ExecPin /></PinRow>
                    <PinRow>Finished<ExecPin /></PinRow>
                    <PinRow>Direction<DataPin color="#0b5c48" /></PinRow>
                  </PinColumn>
                </Pins>
              </Node>

              <Overlay width="400" height="400" aria-hidden="true">
                <path d="M104 338C130 338 150 342 183 342" stroke="#e8e8e8" strokeWidth="2.500" fill="none" />
                <g transform="translate(317 326)">
                  <path d="M10.500 1V20M1 10.500H20" stroke="#fff" strokeWidth="2" />
                  <path d="M10.500 0L14 4.500H7ZM10.500 21L14 16.500H7ZM0 10.500L4.500 7V14ZM21 10.500L16.500 7V14Z" fill="#fff" />
                </g>
              </Overlay>
            </Graph>
          </GraphFrame>

          <TabStrip $gap={7}><Tab icon={<ResultsIcon />} name="编译器结果" /></TabStrip>
          <Results>
            <Log><li>[1295.95]BP_书页 编译成功！[49 毫秒内]（/Game/BP_书页.BP_书页）</li></Log>
            <ClearButton>清除</ClearButton>
          </Results>
        </Dock>

        <Dock>
          <TabStrip><Tab icon={<InfoIcon />} name="细节" /></TabStrip>
          <Panel $fill />
        </Dock>
      </Workspace>
    </App_>
  );
}
